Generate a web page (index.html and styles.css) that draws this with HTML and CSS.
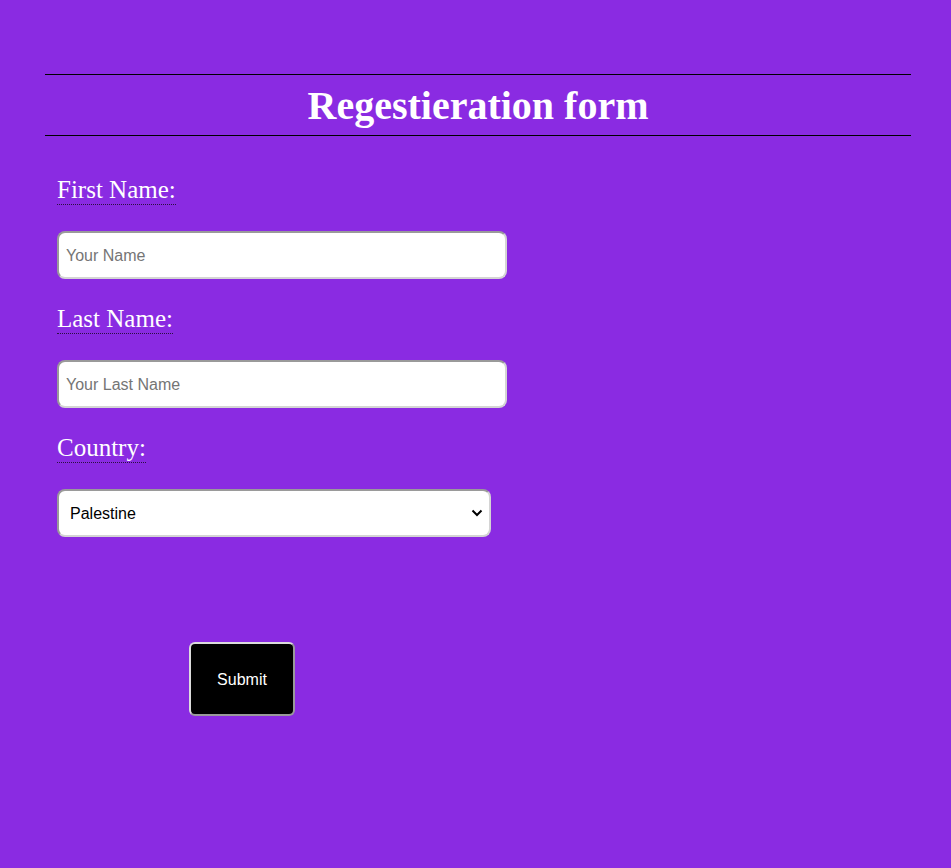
FILE: index.html
```html
<!DOCTYPE html>
<html lang="en">
<head>
    <meta charset="UTF-8">
    <meta name="viewport" content="width=device-width, initial-scale=1.0">
    <title>Regestieration form</title>
    <link rel="stylesheet" href="styles.css">
</head>
<body>
    <div class="page">
        <h1 class="title">Regestieration form</h1>
        <form class="reg-form" onsubmit="return false">
            <label class="label" for="firstName"><span class="label-text">First Name:</span></label>
            <input class="text-input" type="text" id="firstName" placeholder="Your Name">

            <label class="label" for="lastName"><span class="label-text">Last Name:</span></label>
            <input class="text-input" type="text" id="lastName" placeholder="Your Last Name">

            <label class="label" for="country"><span class="label-text">Country:</span></label>
            <div class="select-wrap">
                <select class="country-select" id="country">
                    <option>Palestine</option>
                    <option>Jordan</option>
                    <option>Egypt</option>
                    <option>Lebanon</option>
                </select>
                <svg class="chevron" width="12" height="8" viewBox="0 0 12 8">
                    <path d="M1.5 1.5 L6 6 L10.5 1.5" fill="none" stroke="#000" stroke-width="2"/>
                </svg>
            </div>

            <button class="submit-btn" type="submit">Submit</button>
        </form>
    </div>
</body>
</html>
```

FILE: styles.css
```css
body {
    margin: 0;
    background-color: #8a2be2;
    font-family: "Liberation Serif", "Times New Roman", serif;
    color: #ffffff;
}
.page {
    padding: 74px 40px 0 45px;
}
.title {
    margin: 0;
    padding: 8px 0 6px;
    font-size: 40px;
    line-height: 46px;
    font-weight: bold;
    text-align: center;
    border-top: 1px solid #000;
    border-bottom: 1px solid #000;
}
.reg-form {
    display: flex;
    flex-direction: column;
    align-items: flex-start;
    padding: 40px 12px 0;
}
.label {
    display: block;
    font-size: 25px;
    line-height: 28px;
    margin-bottom: 27px;
}
.label-text {
    padding-bottom: 1px;
    border-bottom: 1px dotted #2a1040;
}
.text-input {
    box-sizing: border-box;
    width: 450px;
    height: 48px;
    margin: 0 0 26px;
    padding: 2px 7px 0;
    font-family: "Liberation Sans", Arial, sans-serif;
    font-size: 16px;
    color: #000;
    background: #fff;
    border: 2px solid;
    border-color: #9a9a9a #d4d4d4 #d4d4d4 #9a9a9a;
    border-radius: 8px;
    outline: none;
}
.text-input::placeholder {
    color: #757575;
}
.select-wrap {
    position: relative;
}
.country-select {
    box-sizing: border-box;
    width: 434px;
    height: 48px;
    padding: 1px 30px 0 11px;
    font-family: "Liberation Sans", Arial, sans-serif;
    font-size: 16px;
    color: #000;
    background: #fff;
    border: 2px solid;
    border-color: #9a9a9a #d4d4d4 #d4d4d4 #9a9a9a;
    border-radius: 8px;
    appearance: none;
    -webkit-appearance: none;
    outline: none;
}
.chevron {
    position: absolute;
    right: 8px;
    top: 20px;
    pointer-events: none;
}
.submit-btn {
    box-sizing: border-box;
    width: 106px;
    height: 74px;
    margin: 105px 0 0 132px;
    padding-top: 3px;
    font-family: "Liberation Sans", Arial, sans-serif;
    font-size: 16px;
    color: #fff;
    background-color: #000;
    border: 2px solid;
    border-color: #dcdcdc #9a9a9a #9a9a9a #dcdcdc;
    border-radius: 6px;
    cursor: pointer;
}
```
